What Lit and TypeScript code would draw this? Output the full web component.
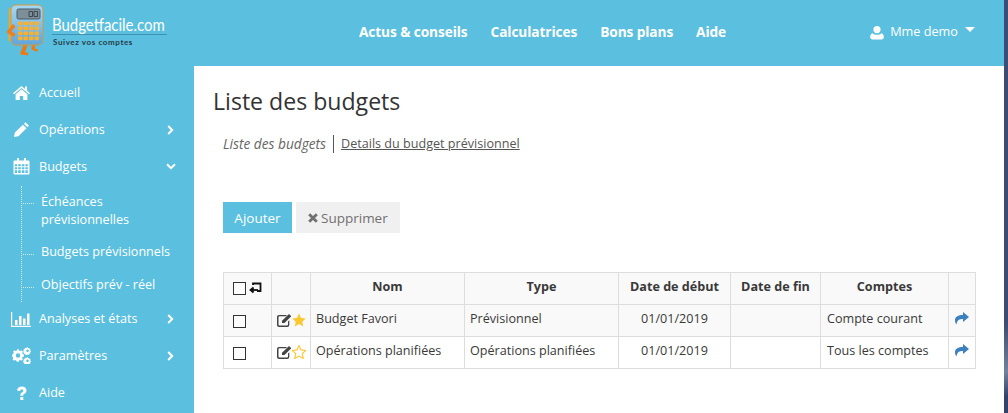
import { LitElement, html, css, svg } from "lit";
import { customElement } from "lit/decorators.js";

const I = {
  home: svg`<path d="M8.500 1 0 8.200l1 1.100L8.500 3l7.500 6.300 1-1.100-3-2.600V1.500h-2v2.400zM8.500 4.300 2.600 9.200V15h4.200v-4h3.400v4h4.200V9.200z"/>`,
  pencil: svg`<path d="M12.500 1.200 16 4.700l-1.600 1.600-3.500-3.500zM10 3.700l3.500 3.500-8 8L1 16l.8-4.500zM2.700 12.300l2.200 2.200-2.800.6z"/>`,
  cal: svg`<path fill-rule="evenodd" d="M4 0h2v2.500h5V0h2v2.500h2.500A1 1 0 0 1 16.500 3.500v12a1 1 0 0 1-1 1h-14a1 1 0 0 1-1-1v-12a1 1 0 0 1 1-1H4zM1.800 6.300v2h2.400v-2zm3.400 0v2h2.600v-2zm3.600 0v2h2.600v-2zm3.600 0v2h2.400v-2zM1.800 9.300v2h2.400v-2zm3.400 0v2h2.600v-2zm3.600 0v2h2.600v-2zm3.600 0v2h2.400v-2zM1.800 12.300v2.800h2.400v-2.800zm3.400 0v2.800h2.600v-2.800zm3.600 0v2.800h2.600v-2.800zm3.600 0v2.800h2.400v-2.800z"/>`,
  chart: svg`<path d="M0 1h1.200v13.800H20V16H0zM4 9h2.500v5H4zM8 5h2.500v9H8zM12 7.500h2.500V14H12zM16 2.500h2.500V14H16z"/>`,
  gears: svg`<path fill-rule="evenodd" d="M7 3.500 8.400 4l1-.7 1.500 1.500-.7 1 .5 1.400 1.300.3v2l-1.300.3-.5 1.400.7 1-1.500 1.500-1-.7-1.400.5-.3 1.300h-2l-.3-1.300L3 13l-1 .7L.5 12.200l.7-1-.5-1.400L0 9.500v-2l1.200-.3.500-1.400-.7-1L2.500 3.300l1 .7 1.400-.5.3-1.200h1.500zM6 6.300a2.200 2.200 0 1 0 0 4.400 2.200 2.200 0 0 0 0-4.400zM15.500 0l.6 1 1.100-.1.400 1.200 1 .5-.3 1.100.7.900-.8.800.1 1.100-1.100.4-.5 1-1.100-.3-.9.700-.8-.8-1.100.1-.4-1.100-1-.5.300-1.100-.7-.9.800-.8-.1-1.100 1.100-.4.500-1 1.100.3zm0 2.500a1.300 1.300 0 1 0 0 2.600 1.300 1.300 0 0 0 0-2.600zM15.500 10l.6 1 1.100-.1.400 1.200 1 .5-.3 1.100.7.900-.8.800.1 1.100-1.100.4-.5 1-1.100-.3-.9.700-.8-.8-1.100.1-.4-1.100-1-.5.300-1.100-.7-.9.800-.8-.1-1.100 1.100-.4.500-1 1.100.3zm0 2.500a1.300 1.300 0 1 0 0 2.600 1.300 1.300 0 0 0 0-2.600z"/>`,
  q: svg`<path d="M1 4.500C1.300 1.800 3.300.5 5.800.5c2.600 0 4.700 1.500 4.700 4 0 1.900-1.100 2.800-2.300 3.600-.8.500-1 .9-1 1.700H4.300c0-1.700.4-2.500 1.500-3.300.8-.6 1.500-1 1.500-1.800s-.7-1.300-1.500-1.300c-1 0-1.600.6-1.800 1.600zM4.300 11h3v3h-3z"/>`,
  user: svg`<path d="M7 0a3.600 3.600 0 1 1 0 7.200A3.600 3.600 0 0 1 7 0zM2.500 7.200c1.200 1 2.800 1.500 4.500 1.500s3.300-.5 4.500-1.500c1.500.2 2.300 1.700 2.300 3.900 0 1.600-.9 2.400-2.300 2.400H2.500C1.100 13.500.200 12.700.200 11.100c0-2.200.8-3.700 2.300-3.900z"/>`,
  share: svg`<path d="M8 0l6 5-6 5V7C4.500 7 2 8 1.500 12.500.3 11 0 9.600 0 8.200 0 4.500 3.500 3 8 3z"/>`,
  edit: svg`<path fill-rule="evenodd" d="M2 2h8L8.800 3.200H2.500a1 1 0 0 0-1 1v7.300a1 1 0 0 0 1 1h7.500a1 1 0 0 0 1-1V8.500l1.300-1.300v4.800A2 2 0 0 1 10.300 14H2a2 2 0 0 1-2-2V4a2 2 0 0 1 2-2z"/><path d="M12 1l2.300 2.300L7.500 10H5V7.800z"/>`,
  star: svg`<path d="M7 .6l2 4.300 4.700.6-3.400 3.200.9 4.700L7 11.100l-4.200 2.300.9-4.700L.3 5.500 5 4.900z"/>`,
};

const icon = (p: unknown, w: number, h: number, vw = w, vh = h) =>
  html`<svg width=${w} height=${h} viewBox="0 0 ${vw} ${vh}" fill="currentColor">${p}</svg>`;

@customElement("app-root")
export class AppRoot extends LitElement {
  static styles = css`
    :host { display: block; width: 1008px; height: 413px; overflow: hidden; background: #fff; font-family: "Open Sans", sans-serif; color: #393939; }
    .page { display: grid; grid-template-columns: 194px 1fr 4px; grid-template-rows: 66px 1fr; height: 413px; background: #5bbfdf; }
    .strip { grid-column: 3; grid-row: 1 / 3; background: linear-gradient(#3c4c72 0 78%, #71829c 90%, #33426c 96%); }
    header { grid-column: 1 / 3; display: flex; position: relative; }
    .logo { width: 194px; display: flex; position: relative; }
    .calc { position: absolute; left: 0; top: 0; }
    .brand { position: absolute; left: 52px; top: 15px; }
    .b1 { font: 400 18px/18px "Lato", sans-serif; color: #fff; border-bottom: 1px solid #3e93ae; width: 115px; height: 19px; white-space: nowrap; }
    .b1 span { display: inline-block; transform: scaleX(0.83); transform-origin: left center; }
    .b2 { font: 700 8px/10px "Lato", sans-serif; color: #233c46; letter-spacing: 0.6px; margin: 2px 0 0 1px; white-space: nowrap; }
    nav { display: flex; gap: 23px; margin-left: 165px; padding-top: 22px; font-weight: 700; font-size: 13.700px; line-height: 19px; color: #fff; letter-spacing: -0.1px; }
    .me { margin-left: auto; margin-right: 29px; padding-top: 22px; display: flex; align-items: flex-start; color: #fff; font-size: 12.700px; line-height: 19px; }
    .me svg { margin: 4px 6px 0 0; }
    .me i { width: 0; height: 0; border: 5px solid transparent; border-top: 5px solid #fff; margin: 5px 0 0 7px; }
    aside { color: #fff; font-size: 12.600px; padding-top: 8px; }
    .item { display: flex; align-items: center; height: 37px; position: relative; }
    .ic { width: 42px; margin-right: -3px; display: flex; justify-content: center; flex: none; }
    .chev { margin-left: auto; margin-right: 20px; }
    .chev.down { margin-right: 18px; }
    .sub { position: relative; padding: 0 0 0 41px; height: 117px; margin-top: -2px; }
    .sub::before { content: ""; position: absolute; left: 21px; top: 3px; bottom: -2px; border-left: 1px dotted #cdebf5; }
    .sub div { position: relative; line-height: 18px; box-sizing: border-box; }
    .sub div::before { content: ""; position: absolute; left: -18px; width: 11px; border-top: 1px dotted #cdebf5; }
    .sub .s1 { height: 60px; padding-top: 10px; }
    .sub .s1::before { top: 20px; }
    .sub .s2 { height: 33px; }
    .sub .s2::before { top: 11px; }
    main { background: #fff; padding: 19px 0 0 19px; position: relative; overflow: hidden; }
    h1 { margin: 0; font-weight: 400; font-size: 23.100px; line-height: 32px; color: #333; }
    .crumbs { display: flex; align-items: center; margin: 18px 0 0 10px; font-size: 12.600px; line-height: 18px; }
    .crumbs em { color: #666; font-size: 13.700px; padding-right: 7px; border-right: 1px solid #555; }
    .crumbs a { color: #555; text-decoration: underline; margin-left: 7px; }
    .btns { display: flex; gap: 4px; margin: 49px 0 0 10px; }
    .btn { height: 31px; display: flex; align-items: center; font-size: 13.500px; box-sizing: border-box; }
    .add { width: 69px; background: #5bbfdf; color: #fff; justify-content: center; }
    .del { width: 104px; background: #f0f0f0; color: #707070; padding-left: 12px; gap: 3px; }
    table { border-collapse: collapse; margin: 39px 0 0 10px; font-size: 12.600px; table-layout: fixed; width: 752px; color: #393939; }
    td, th { border: 1px solid #ddd; padding: 0 0 5px; height: 32px; box-sizing: border-box; vertical-align: middle; }
    th { font-weight: 700; text-align: center; background: #f9f9f9; }
    tr:nth-child(2) td { background: #f9f9f9; }
    .cb { display: block; width: 11px; height: 11px; border: 1px solid #333; background: #fff; }
    td.box { padding: 2px 0 0 9px; }
    .l { padding-left: 5px; white-space: nowrap; }
    .lc { padding-left: 6px; white-space: nowrap; }
    .c { text-align: center; }
    .acts { display: flex; align-items: center; gap: 1px; padding: 3px 0 0 5px; color: #444; }
    .head0 { display: flex; align-items: center; padding: 5px 0 0 9px; gap: 3px; }
    .gold { color: #fdc72f; }
    .go { color: #3c80c0; display: flex; padding: 1px 0 0 6px; }
  `;

  private side(ic: unknown, label: string, chev?: "r" | "d") {
    return html`<div class="item"><span class="ic">${ic}</span><span>${label}</span>
      ${chev === "r" ? html`<svg class="chev" width="7" height="10" viewBox="0 0 7 10" fill="none" stroke="#fff" stroke-width="2"><path d="M1.200 1 5.200 5l-4 4"/></svg>` : ""}
      ${chev === "d" ? html`<svg class="chev down" width="10" height="7" viewBox="0 0 10 7" fill="none" stroke="#fff" stroke-width="2"><path d="M1 1.200 5 5.200l4-4"/></svg>` : ""}</div>`;
  }

  render() {
    const star = (on: boolean) => html`<svg class="gold" width="14" height="14" viewBox="0 0 14 14" fill=${on ? "currentColor" : "none"} stroke="currentColor" stroke-width=${on ? 0 : 1.1}>${I.star}</svg>`;
    const row = (fav: boolean, nom: string, type: string, comptes: string) => html`<tr>
      <td class="box"><span class="cb"></span></td>
      <td><div class="acts">${icon(I.edit, 14, 14)}${star(fav)}</div></td>
      <td class="l">${nom}</td><td class="l">${type}</td><td class="c">01/01/2019</td><td></td>
      <td class="lc">${comptes}</td>
      <td><div class="go">${icon(I.share, 14, 13, 14, 13)}</div></td></tr>`;
    return html`<div class="page">
      <header>
        <div class="logo">
          <svg class="calc" width="50" height="58" viewBox="0 0 50 58">
            <defs><linearGradient id="cb" x1="0" y1="0" x2="0" y2="1"><stop offset="0" stop-color="#a5d8f3"/><stop offset="1" stop-color="#5ea6dd"/></linearGradient></defs>
            <path d="M12 7 9 9l-.5 31 4 3z" fill="#f6a821"/>
            <path d="M24 42l-2.500 8.500-1.500 2.500 1 1.800 7 .5.500-2.500-3.500-.5 3.500-9.500zM32 42l-.5 7.500 5.500 2.500 1-2.500-3-1 .8-6.500z" fill="#ec7b14"/>
            <rect x="11" y="5" width="32" height="40" rx="5" fill="url(#cb)" stroke="#d39a3f"/>
            <path d="M13 24 8 30c-1.500 1.500-1.500 2.500 0 3.500l6 3.500 1.500-3-4-2.500 4-5z" fill="#ee7f19"/>
            <rect x="17" y="9" width="23" height="10" rx="1.500" fill="#7d8f98" stroke="#4f5a66"/>
            <path d="M29 11.500h3.500v5H29zM34 11.500h3.500v5H34z" fill="none" stroke="#3c4650"/>
            <g fill="#fbb02c">${[0, 1, 2, 3].flatMap((r) => [0, 1, 2, 3].map((c) => svg`<rect x=${18 + c * 5.500} y=${21.500 + r * 5} width="4.500" height="3.800" rx="1"/>`))}</g>
          </svg>
          <div class="brand"><div class="b1"><span>Budgetfacile.com</span></div><div class="b2">Suivez vos comptes</div></div>
        </div>
        <nav><span>Actus &amp; conseils</span><span>Calculatrices</span><span>Bons plans</span><span>Aide</span></nav>
        <div class="me">${icon(I.user, 14, 14)}<span>Mme demo</span><i></i></div>
      </header>
      <div class="strip"></div>
      <aside>
        ${this.side(icon(I.home, 17, 16), "Accueil")}
        ${this.side(icon(I.pencil, 17, 17), "Opérations", "r")}
        ${this.side(icon(I.cal, 17, 17), "Budgets", "d")}
        <div class="sub">
          <div class="s1">Échéances<br />prévisionnelles</div>
          <div class="s2">Budgets prévisionnels</div>
          <div class="s2">Objectifs prév - réel</div>
        </div>
        ${this.side(icon(I.chart, 20, 16), "Analyses et états", "r")}
        ${this.side(icon(I.gears, 19, 17), "Paramètres", "r")}
        ${this.side(icon(I.q, 11, 14), "Aide")}
      </aside>
      <main>
        <h1>Liste des budgets</h1>
        <div class="crumbs"><em>Liste des budgets</em><a>Details du budget prévisionnel</a></div>
        <div class="btns">
          <div class="btn add">Ajouter</div>
          <div class="btn del">
            <svg width="10" height="10" viewBox="0 0 10 10" fill="none" stroke="#707070" stroke-width="2.800"><path d="M1.200 1.200l7.600 7.600M8.800 1.200l-7.600 7.600"/></svg>Supprimer
          </div>
        </div>
        <table>
          <colgroup><col style="width:48px"/><col style="width:39px"/><col style="width:154px"/><col style="width:154px"/><col style="width:112px"/><col style="width:90px"/><col style="width:128px"/><col style="width:27px"/></colgroup>
          <tr>
            <th><div class="head0"><span class="cb"></span><svg width="13" height="13" viewBox="0 0 13 13" fill="none" stroke="#111" stroke-width="1.800"><path d="M4 3V1.500h7.500v7.500H8"/><path d="M9 8H3"/><path d="M4.500 5.500 1.500 8l3 2.500" fill="#111"/></svg></div></th>
            <th></th><th>Nom</th><th>Type</th><th>Date de début</th><th>Date de fin</th><th>Comptes</th><th></th>
          </tr>
          ${row(true, "Budget Favori", "Prévisionnel", "Compte courant")}
          ${row(false, "Opérations planifiées", "Opérations planifiées", "Tous les comptes")}
        </table>
      </main>
    </div>`;
  }
}
